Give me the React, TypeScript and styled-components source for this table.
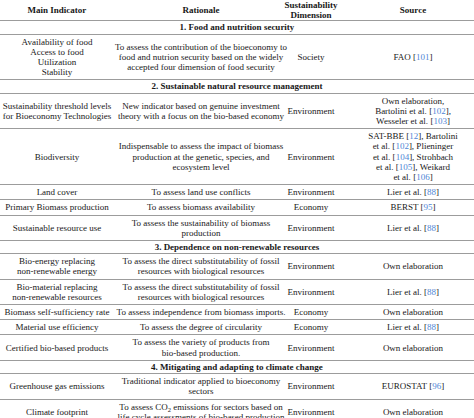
import React from "react";
import styled, { createGlobalStyle } from "styled-components";

const Global = createGlobalStyle`
  html, body { margin: 0; padding: 0; background: #fff; }
  body { font-family: "Liberation Serif", "Times New Roman", serif; color: #181818; }
`;

const Table = styled.div`
  width: 474px;
  font-family: "Liberation Serif", "Times New Roman", serif;
  font-size: 9px;
  line-height: 10.2px;
  color: #181818;
`;

const Row = styled.div<{ $pad?: number }>`
  display: grid;
  grid-template-columns: 114px 156px 82px 122px;
  align-items: center;
  padding: ${(p) => (p.$pad ?? 2)}px 0;
  border-bottom: 1px solid #9c9c9c;
`;

const Cell = styled.div<{ $shift?: number }>`
  display: flex;
  justify-content: center;
  text-align: center;
  white-space: nowrap;
  padding-left: ${(p) => p.$shift ?? 0}px;
`;

const HeadCell = styled(Cell)`
  font-weight: bold;
`;

const Section = styled.div`
  padding: 1px 0;
  border-bottom: 1px solid #9c9c9c;
  text-align: center;
  font-weight: bold;
  white-space: nowrap;
`;

const Ref = styled.span`
  color: #4f86d6;
`;

const Sub = styled.sub`
  font-size: 6.5px;
  line-height: 0;
  vertical-align: -1.5px;
`;

type R = {
  main: React.ReactNode;
  rat: React.ReactNode;
  dim: string;
  src: React.ReactNode;
};

const RAT_SHIFT = 18;

const lines = (...xs: React.ReactNode[]) =>
  xs.map((x, i) => (
    <React.Fragment key={i}>
      {i > 0 && <br />}
      {x}
    </React.Fragment>
  ));

const cite = (pre: string, n: string, post = "") => (
  <>
    {pre}[<Ref>{n}</Ref>]{post}
  </>
);

const groups: { title: string; rows: R[] }[] = [
  {
    title: "1. Food and nutrition security",
    rows: [
      {
        main: lines("Availability of food", "Access to food", "Utilization", "Stability"),
        rat: lines(
          "To assess the contribution of the bioeconomy to",
          "food and nutrion security based on the widely",
          "accepted four dimension of food security"
        ),
        dim: "Society",
        src: cite("FAO ", "101"),
      },
    ],
  },
  {
    title: "2. Sustainable natural resource management",
    rows: [
      {
        main: lines("Sustainability threshold levels", "for Bioeconomy Technologies"),
        rat: lines("New indicator based on genuine investment", "theory with a focus on the bio-based economy"),
        dim: "Environment",
        src: lines("Own elaboration,", cite("Bartolini et al. ", "102", ","), cite("Wesseler et al. ", "103")),
      },
      {
        main: "Biodiversity",
        rat: lines(
          "Indispensable to assess the impact of biomass",
          "production at the genetic, species, and",
          "ecosystem level"
        ),
        dim: "Environment",
        src: lines(
          <>
            SAT-BBE [<Ref>12</Ref>], Bartolini
          </>,
          <>
            et al. [<Ref>102</Ref>], Plieninger
          </>,
          <>
            et al. [<Ref>104</Ref>], Strohbach
          </>,
          <>
            et al. [<Ref>105</Ref>], Weikard
          </>,
          cite("et al. ", "106")
        ),
      },
      { main: "Land cover", rat: "To assess land use conflicts", dim: "Environment", src: cite("Lier et al. ", "88") },
      { main: "Primary Biomass production", rat: "To assess biomass availability", dim: "Economy", src: cite("BERST ", "95") },
      {
        main: "Sustainable resource use",
        rat: lines("To assess the sustainability of biomass", "production"),
        dim: "Environment",
        src: cite("Lier et al. ", "88"),
      },
    ],
  },
  {
    title: "3. Dependence on non-renewable resources",
    rows: [
      {
        main: lines("Bio-energy replacing", "non-renewable energy"),
        rat: lines("To assess the direct substitutability of fossil", "resources with biological resources"),
        dim: "Environment",
        src: "Own elaboration",
      },
      {
        main: lines("Bio-material replacing", "non-renewable resources"),
        rat: lines("To assess the direct substitutability of fossil", "resources with biological resources"),
        dim: "Environment",
        src: cite("Lier et al. ", "88"),
      },
      {
        main: "Biomass self-sufficiency rate",
        rat: "To assess independence from biomass imports.",
        dim: "Economy",
        src: "Own elaboration",
      },
      { main: "Material use efficiency", rat: "To assess the degree of circularity", dim: "Economy", src: cite("Lier et al. ", "88") },
      {
        main: "Certified bio-based products",
        rat: lines("To assess the variety of products from", "bio-based production."),
        dim: "Environment",
        src: "Own elaboration",
      },
    ],
  },
  {
    title: "4. Mitigating and adapting to climate change",
    rows: [
      {
        main: "Greenhouse gas emissions",
        rat: lines("Traditional indicator applied to bioeconomy", "sectors"),
        dim: "Environment",
        src: cite("EUROSTAT ", "96"),
      },
      {
        main: "Climate footprint",
        rat: lines(
          <>
            To assess CO<Sub>2</Sub> emissions for sectors based on
          </>,
          "life cycle assessments of bio-based production"
        ),
        dim: "Environment",
        src: "Own elaboration",
      },
    ],
  },
];

export default function App() {
  return (
    <>
      <Global />
      <Table>
        <Row $pad={0}>
          <HeadCell>Main Indicator</HeadCell>
          <HeadCell $shift={RAT_SHIFT}>Rationale</HeadCell>
          <HeadCell>{lines("Sustainability", "Dimension")}</HeadCell>
          <HeadCell>Source</HeadCell>
        </Row>
        {groups.map((g) => (
          <React.Fragment key={g.title}>
            <Section>{g.title}</Section>
            {g.rows.map((r, i) => (
              <Row key={i}>
                <Cell>
                  <div>{r.main}</div>
                </Cell>
                <Cell $shift={RAT_SHIFT}>
                  <div>{r.rat}</div>
                </Cell>
                <Cell>{r.dim}</Cell>
                <Cell>
                  <div>{r.src}</div>
                </Cell>
              </Row>
            ))}
          </React.Fragment>
        ))}
      </Table>
    </>
  );
}
